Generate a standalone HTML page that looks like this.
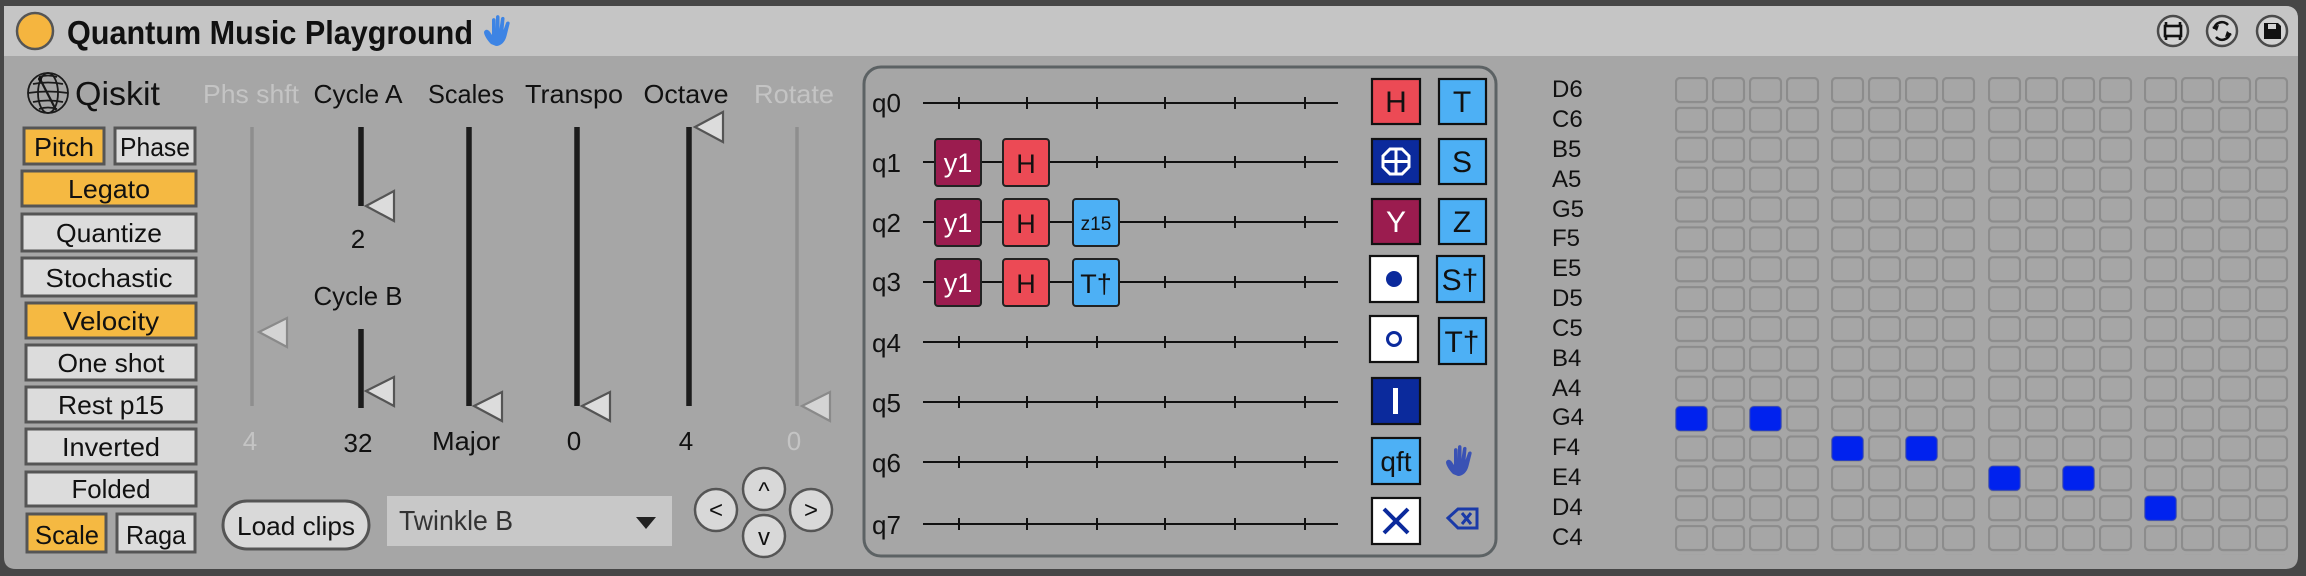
<!DOCTYPE html>
<html><head><meta charset="utf-8"><style>
html,body{margin:0;padding:0;background:#474747;}
svg{display:block;}
text{font-family:"Liberation Sans",Arial,sans-serif;}
</style></head><body>
<svg width="2306" height="576" viewBox="0 0 2306 576" xmlns="http://www.w3.org/2000/svg">
<defs>
<pattern id="cell" patternUnits="userSpaceOnUse" x="0" y="0" width="37" height="29.87">
<rect x="1" y="1" width="31" height="24" rx="4" fill="none" stroke="#8c8c8c" stroke-width="2.2"/>
</pattern>
<path id="hand" d="M8,30 C4,26 1,21 1,18 C2,15 5,15 7,18 L9,21 L9,6 C9,3.5 12.5,3.5 12.5,6 L12.5,15 L13,3 C13,0.5 16.5,0.5 16.5,3 L16.5,15 L18,4.5 C18.5,2 22,2.5 21.5,5 L20.5,16 L23,9 C24,6.5 27.5,7.5 26.5,10 L23.5,22 C22,28 18,32 13,32 Z"/>
</defs>
<rect x="0" y="0" width="2306" height="576" fill="#474747"/>
<path d="M4,6 L2285,6 Q2298,6 2298,19 L2298,556 Q2298,569 2285,569 L16,569 Q4,569 4,557 Z" fill="#a6a6a6"/>
<path d="M4,6 L2285,6 Q2298,6 2298,19 L2298,56 L4,56 Z" fill="#c5c5c5"/>
<circle cx="35" cy="31" r="18" fill="#f5b53f" stroke="#555" stroke-width="2.5"/>
<text x="67" y="44" font-size="33" font-weight="bold" fill="#111" textLength="406" lengthAdjust="spacingAndGlyphs">Quantum Music Playground</text>
<use href="#hand" transform="translate(483,14)" fill="#3d84e4"/>
<g stroke="#4a4a4a" stroke-width="2.5" fill="#d2d2d2">
<circle cx="2173" cy="31" r="15"/><circle cx="2222" cy="31" r="15"/><circle cx="2272" cy="31" r="15"/>
</g>
<g stroke="#111" stroke-width="2.6" fill="none">
<rect x="2165" y="26" width="16" height="10"/>
<line x1="2166" y1="22" x2="2166" y2="26"/><line x1="2180" y1="22" x2="2180" y2="26"/>
<line x1="2166" y1="36" x2="2166" y2="40"/><line x1="2180" y1="36" x2="2180" y2="40"/>
<path d="M2228,25 A8,8 0 0 0 2214,29"/><path d="M2216,37 A8,8 0 0 0 2230,33"/>
</g>
<path d="M2212,27 L2217,31 L2219,25 Z M2232,35 L2227,31 L2225,37 Z" fill="#111"/>
<path d="M2264,23 L2278,23 L2281,26 L2281,39 L2264,39 Z" fill="#111"/>
<rect x="2268" y="24" width="8" height="5" fill="#d2d2d2"/>
<g stroke="#1a1a1a" stroke-width="1.8" fill="none">
<circle cx="48" cy="93" r="20"/>
<path d="M39,77 Q48,74 57,77 M33,84 Q48,81 63,84 M28,93 Q48,90 68,93 M33,102 Q48,99 63,102 M39,109 Q48,106 57,109"/>
<ellipse cx="48" cy="93" rx="10" ry="20"/>
<line x1="40" y1="79" x2="56" y2="110" stroke-width="2.2"/>
</g>
<circle cx="40" cy="79" r="2" fill="#111"/>
<text x="75" y="105" font-size="33" fill="#111" textLength="85" lengthAdjust="spacingAndGlyphs">Qiskit</text>
<g font-size="26" text-anchor="middle">
<text x="251" y="103" fill="#c4c4c4" textLength="96" lengthAdjust="spacingAndGlyphs">Phs shft</text>
<text x="358" y="103" fill="#111" textLength="89" lengthAdjust="spacingAndGlyphs">Cycle A</text>
<text x="466" y="103" fill="#111" textLength="76" lengthAdjust="spacingAndGlyphs">Scales</text>
<text x="574" y="103" fill="#111" textLength="98" lengthAdjust="spacingAndGlyphs">Transpo</text>
<text x="686" y="103" fill="#111" textLength="85" lengthAdjust="spacingAndGlyphs">Octave</text>
<text x="794" y="103" fill="#c4c4c4" textLength="80" lengthAdjust="spacingAndGlyphs">Rotate</text>
<text x="358" y="248" fill="#111">2</text>
<text x="358" y="305" fill="#111" textLength="89" lengthAdjust="spacingAndGlyphs">Cycle B</text>
<text x="250" y="450" fill="#c4c4c4">4</text>
<text x="358" y="452" fill="#111">32</text>
<text x="466" y="450" fill="#111" textLength="68" lengthAdjust="spacingAndGlyphs">Major</text>
<text x="574" y="450" fill="#111">0</text>
<text x="686" y="450" fill="#111">4</text>
<text x="794" y="450" fill="#c4c4c4">0</text>
</g>
<g stroke-linecap="butt">
<line x1="252" y1="127" x2="252" y2="406" stroke="#8e8e8e" stroke-width="3.5"/>
<line x1="361" y1="127" x2="361" y2="206" stroke="#1c1c1c" stroke-width="5.5"/>
<line x1="361" y1="329" x2="361" y2="408" stroke="#1c1c1c" stroke-width="5.5"/>
<line x1="469" y1="127" x2="469" y2="406" stroke="#1c1c1c" stroke-width="5.5"/>
<line x1="577" y1="127" x2="577" y2="406" stroke="#1c1c1c" stroke-width="5.5"/>
<line x1="689" y1="127" x2="689" y2="406" stroke="#1c1c1c" stroke-width="5.5"/>
<line x1="797" y1="127" x2="797" y2="406" stroke="#8e8e8e" stroke-width="3.5"/>
</g>
<g fill="#dcdcdc" stroke="#555" stroke-width="2.2">
<polygon points="259,332 287,318 287,347" fill="#d4d4d4" stroke="#8a8a8a"/>
<polygon points="366,206 394,191 394,221"/>
<polygon points="366,391 394,377 394,406"/>
<polygon points="474,406 502,392 502,421"/>
<polygon points="582,406 610,392 610,421"/>
<polygon points="695,127 723,112 723,142"/>
<polygon points="802,406 830,392 830,421" fill="#d4d4d4" stroke="#8a8a8a"/>
</g>
<g stroke="#555" stroke-width="3">
<rect x="24" y="128" width="80" height="36" fill="#f5b942"/>
<rect x="115" y="128" width="80" height="36" fill="#dcdcdc"/>
<rect x="22" y="171" width="174" height="35" fill="#f5b942"/>
<rect x="22" y="214" width="174" height="37" fill="#dcdcdc"/>
<rect x="22" y="258" width="174" height="38" fill="#dcdcdc"/>
<rect x="26" y="303" width="170" height="35" fill="#f5b942"/>
<rect x="26" y="345" width="170" height="35" fill="#dcdcdc"/>
<rect x="26" y="387" width="170" height="35" fill="#dcdcdc"/>
<rect x="26" y="429" width="170" height="35" fill="#dcdcdc"/>
<rect x="26" y="472" width="170" height="34" fill="#dcdcdc"/>
<rect x="27" y="514" width="79" height="38" fill="#f5b942"/>
<rect x="117" y="514" width="78" height="38" fill="#dcdcdc"/>
</g>
<g font-size="26" text-anchor="middle" fill="#111">
<text x="64" y="156" textLength="60" lengthAdjust="spacingAndGlyphs">Pitch</text>
<text x="155" y="156" textLength="70" lengthAdjust="spacingAndGlyphs">Phase</text>
<text x="109" y="198" textLength="82" lengthAdjust="spacingAndGlyphs">Legato</text>
<text x="109" y="242" textLength="106" lengthAdjust="spacingAndGlyphs">Quantize</text>
<text x="109" y="287" textLength="127" lengthAdjust="spacingAndGlyphs">Stochastic</text>
<text x="111" y="330" textLength="96" lengthAdjust="spacingAndGlyphs">Velocity</text>
<text x="111" y="372" textLength="107" lengthAdjust="spacingAndGlyphs">One shot</text>
<text x="111" y="414" textLength="106" lengthAdjust="spacingAndGlyphs">Rest p15</text>
<text x="111" y="456" textLength="98" lengthAdjust="spacingAndGlyphs">Inverted</text>
<text x="111" y="498" textLength="79" lengthAdjust="spacingAndGlyphs">Folded</text>
<text x="67" y="544" textLength="64" lengthAdjust="spacingAndGlyphs">Scale</text>
<text x="156" y="544" textLength="60" lengthAdjust="spacingAndGlyphs">Raga</text>
</g>
<rect x="223" y="501" width="146" height="48" rx="24" fill="#d9d9d9" stroke="#555" stroke-width="3"/>
<text x="296" y="535" font-size="26" text-anchor="middle" fill="#111" textLength="118" lengthAdjust="spacingAndGlyphs">Load clips</text>
<rect x="387" y="496" width="285" height="50" fill="#c8c8c8"/>
<text x="399" y="530" font-size="28" fill="#333" textLength="114" lengthAdjust="spacingAndGlyphs">Twinkle B</text>
<polygon points="636,517 656,517 646,529" fill="#222"/>
<g fill="#d8d8d8" stroke="#555" stroke-width="2.5">
<circle cx="716" cy="510" r="21"/><circle cx="764" cy="489" r="21"/><circle cx="811" cy="510" r="21"/><circle cx="764" cy="536" r="21"/>
</g>
<g font-size="24" text-anchor="middle" fill="#111">
<text x="716" y="518">&lt;</text><text x="764" y="499">^</text><text x="811" y="518">&gt;</text><text x="764" y="545">v</text>
</g>
<rect x="864" y="67" width="632" height="489" rx="17" fill="#a6a6a6" stroke="#5c6264" stroke-width="3"/>
<g font-size="26" fill="#111">
<text x="872" y="112">q0</text><text x="872" y="172">q1</text><text x="872" y="232">q2</text><text x="872" y="291">q3</text>
<text x="872" y="352">q4</text><text x="872" y="412">q5</text><text x="872" y="472">q6</text><text x="872" y="534">q7</text>
</g>
<g stroke="#111" stroke-width="2">
<line x1="923" y1="103" x2="1338" y2="103"/>
<line x1="923" y1="162" x2="1338" y2="162"/>
<line x1="923" y1="222" x2="1338" y2="222"/>
<line x1="923" y1="282" x2="1338" y2="282"/>
<line x1="923" y1="342" x2="1338" y2="342"/>
<line x1="923" y1="402" x2="1338" y2="402"/>
<line x1="923" y1="462" x2="1338" y2="462"/>
<line x1="923" y1="524" x2="1338" y2="524"/>
<path d="M959,97v12M1027,97v12M1097,97v12M1165,97v12M1235,97v12M1305,97v12
M1097,156v12M1165,156v12M1235,156v12M1305,156v12
M1165,216v12M1235,216v12M1305,216v12
M1165,276v12M1235,276v12M1305,276v12
M959,336v12M1027,336v12M1097,336v12M1165,336v12M1235,336v12M1305,336v12
M959,396v12M1027,396v12M1097,396v12M1165,396v12M1235,396v12M1305,396v12
M959,456v12M1027,456v12M1097,456v12M1165,456v12M1235,456v12M1305,456v12
M959,518v12M1027,518v12M1097,518v12M1165,518v12M1235,518v12M1305,518v12"/>
</g>
<g stroke="#222" stroke-width="2">
<rect x="935" y="139" width="46" height="47" rx="3" fill="#9b1c4f"/>
<rect x="1003" y="139" width="46" height="47" rx="3" fill="#ec4a55"/>
<rect x="935" y="199" width="46" height="47" rx="3" fill="#9b1c4f"/>
<rect x="1003" y="199" width="46" height="47" rx="3" fill="#ec4a55"/>
<rect x="1073" y="199" width="46" height="47" rx="3" fill="#4db0f5"/>
<rect x="935" y="259" width="46" height="47" rx="3" fill="#9b1c4f"/>
<rect x="1003" y="259" width="46" height="47" rx="3" fill="#ec4a55"/>
<rect x="1073" y="259" width="46" height="47" rx="3" fill="#4db0f5"/>
</g>
<g font-size="27" text-anchor="middle">
<text x="958" y="172" fill="#fff">y1</text><text x="1026" y="173" fill="#111">H</text>
<text x="958" y="232" fill="#fff">y1</text><text x="1026" y="233" fill="#111">H</text>
<text x="1096" y="230" fill="#111" font-size="19">z15</text>
<text x="958" y="292" fill="#fff">y1</text><text x="1026" y="293" fill="#111">H</text>
<text x="1096" y="293" fill="#111">T†</text>
</g>
<g stroke="#111" stroke-width="2.2">
<rect x="1372" y="79" width="48" height="45" fill="#ec4a55"/>
<rect x="1439" y="79" width="47" height="45" fill="#4db0f5"/>
<rect x="1372" y="139" width="48" height="45" fill="#0b2a9c"/>
<rect x="1439" y="139" width="47" height="45" fill="#4db0f5"/>
<rect x="1372" y="199" width="48" height="45" fill="#9b1c4f"/>
<rect x="1439" y="199" width="47" height="45" fill="#4db0f5"/>
<rect x="1370" y="256" width="48" height="46" fill="#ffffff"/>
<rect x="1437" y="256" width="47" height="46" fill="#4db0f5"/>
<rect x="1370" y="316" width="48" height="46" fill="#ffffff"/>
<rect x="1439" y="318" width="47" height="46" fill="#4db0f5"/>
<rect x="1372" y="378" width="48" height="46" fill="#0b2a9c"/>
<rect x="1372" y="438" width="48" height="46" fill="#4db0f5"/>
<rect x="1372" y="498" width="48" height="46" fill="#ffffff"/>
</g>
<g font-size="30" text-anchor="middle" fill="#111">
<text x="1396" y="112">H</text><text x="1462" y="112">T</text>
<text x="1462" y="172">S</text>
<text x="1396" y="232" fill="#fff">Y</text><text x="1462" y="232">Z</text>
<text x="1460" y="290">S†</text>
<text x="1462" y="352">T†</text>
<text x="1396" y="471" font-size="28">qft</text>
</g>
<g stroke="#fff" stroke-width="3" fill="none">
<polygon points="1390,149 1402,149 1409,156 1409,167 1402,174 1390,174 1383,167 1383,156"/>
<line x1="1396" y1="149" x2="1396" y2="174"/><line x1="1383" y1="161.5" x2="1409" y2="161.5"/>
</g>
<circle cx="1394" cy="279" r="8" fill="#0b2a9c"/>
<circle cx="1394" cy="339" r="6.5" fill="none" stroke="#0b2a9c" stroke-width="3"/>
<rect x="1393" y="388" width="5" height="26" fill="#fff"/>
<path d="M1384,509 L1408,533 M1408,509 L1384,533" stroke="#0b2a9c" stroke-width="4"/>
<use href="#hand" transform="translate(1445,444)" fill="#3a52b4"/>
<path d="M1448,518 L1458,509 L1477,509 L1477,528 L1458,528 Z" fill="none" stroke="#1a3aa8" stroke-width="3"/>
<path d="M1462,513 L1471,524 M1471,513 L1462,524" stroke="#1a3aa8" stroke-width="3"/>
<g font-size="24" fill="#111">
<text x="1552" y="97">D6</text><text x="1552" y="127">C6</text><text x="1552" y="157">B5</text><text x="1552" y="187">A5</text>
<text x="1552" y="217">G5</text><text x="1552" y="246">F5</text><text x="1552" y="276">E5</text><text x="1552" y="306">D5</text>
<text x="1552" y="336">C5</text><text x="1552" y="366">B4</text><text x="1552" y="396">A4</text><text x="1552" y="425">G4</text>
<text x="1552" y="455">F4</text><text x="1552" y="485">E4</text><text x="1552" y="515">D4</text><text x="1552" y="545">C4</text>
</g>
<g transform="translate(1675,77)"><rect width="148" height="478" fill="url(#cell)"/></g>
<g transform="translate(1831,77)"><rect width="148" height="478" fill="url(#cell)"/></g>
<g transform="translate(1988,77)"><rect width="148" height="478" fill="url(#cell)"/></g>
<g transform="translate(2144,77)"><rect width="148" height="478" fill="url(#cell)"/></g>
<g fill="#0022ee" stroke="#2a3fc0" stroke-width="1">
<rect x="1676" y="406.6" width="31" height="24" rx="4"/>
<rect x="1750" y="406.6" width="31" height="24" rx="4"/>
<rect x="1832" y="436.5" width="31" height="24" rx="4"/>
<rect x="1906" y="436.5" width="31" height="24" rx="4"/>
<rect x="1989" y="466.3" width="31" height="24" rx="4"/>
<rect x="2063" y="466.3" width="31" height="24" rx="4"/>
<rect x="2145" y="496.2" width="31" height="24" rx="4"/>
</g>
</svg>
</body></html>
